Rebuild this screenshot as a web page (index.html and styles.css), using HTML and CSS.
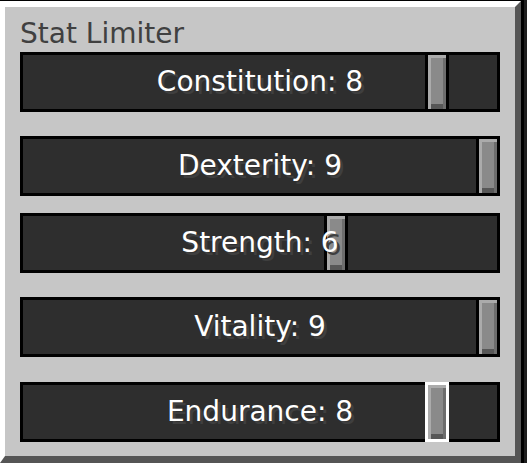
FILE: index.html
```html
<!DOCTYPE html>
<html>
<head>
<meta charset="utf-8">
<link rel="stylesheet" href="styles.css">
</head>
<body>
<div class="panel">
  <div class="frame">
    <div class="title">Stat Limiter</div>
    <div class="slider s1"><div class="handle" style="left:402px"></div><span class="label">Constitution: 8</span></div>
    <div class="slider s2"><div class="handle" style="left:453px"></div><span class="label">Dexterity: 9</span></div>
    <div class="slider s3"><div class="handle" style="left:301px"></div><span class="label">Strength: 6</span></div>
    <div class="slider s4"><div class="handle" style="left:453px"></div><span class="label">Vitality: 9</span></div>
    <div class="slider s5"><div class="handle focused" style="left:402px"></div><span class="label">Endurance: 8</span></div>
  </div>
</div>
</body>
</html>
```
FILE: styles.css
```css
html, body {
  margin: 0;
  padding: 0;
  background: #1e1e1e;
  overflow: hidden;
}
.panel {
  width: 524px;
  border-top: 1px solid #000;
  border-right: 3px solid #000;
  box-sizing: border-box;
}
.frame {
  background: #c6c6c6;
  border-top: 6px solid #fff;
  border-left: 5px solid #fff;
  border-right: 6px solid #555;
  border-bottom: 7px solid #555;
  padding: 13px 15px 14px 15px;
  display: flex;
  flex-direction: column;
  font-family: "DejaVu Sans", sans-serif;
  font-size: 28px;
  line-height: 28px;
}
.title {
  color: #404040;
  margin-bottom: 4px;
  height: 28px;
}
.slider {
  position: relative;
  height: 60px;
  box-sizing: border-box;
  border: 3px solid #000;
  background: #2e2e2e;
  display: flex;
  align-items: center;
  justify-content: center;
}
.s2 { margin-top: 24px; }
.s3 { margin-top: 17px; }
.s4 { margin-top: 24px; }
.s5 { margin-top: 25px; }
.label {
  position: relative;
  z-index: 1;
  color: #fff;
  text-shadow: 3px 3px 0 #3f3f3f;
  white-space: nowrap;
}
.handle {
  position: absolute;
  top: -3px;
  width: 24px;
  height: 60px;
  box-sizing: border-box;
  border: 3px solid #000;
  background: #8a8a8a;
  box-shadow: inset 3px 3px 0 #ababab, inset -3px 0 0 #6d6d6d, inset 0 -5px 0 #575757;
}
.handle.focused {
  border-color: #fff;
}
```
